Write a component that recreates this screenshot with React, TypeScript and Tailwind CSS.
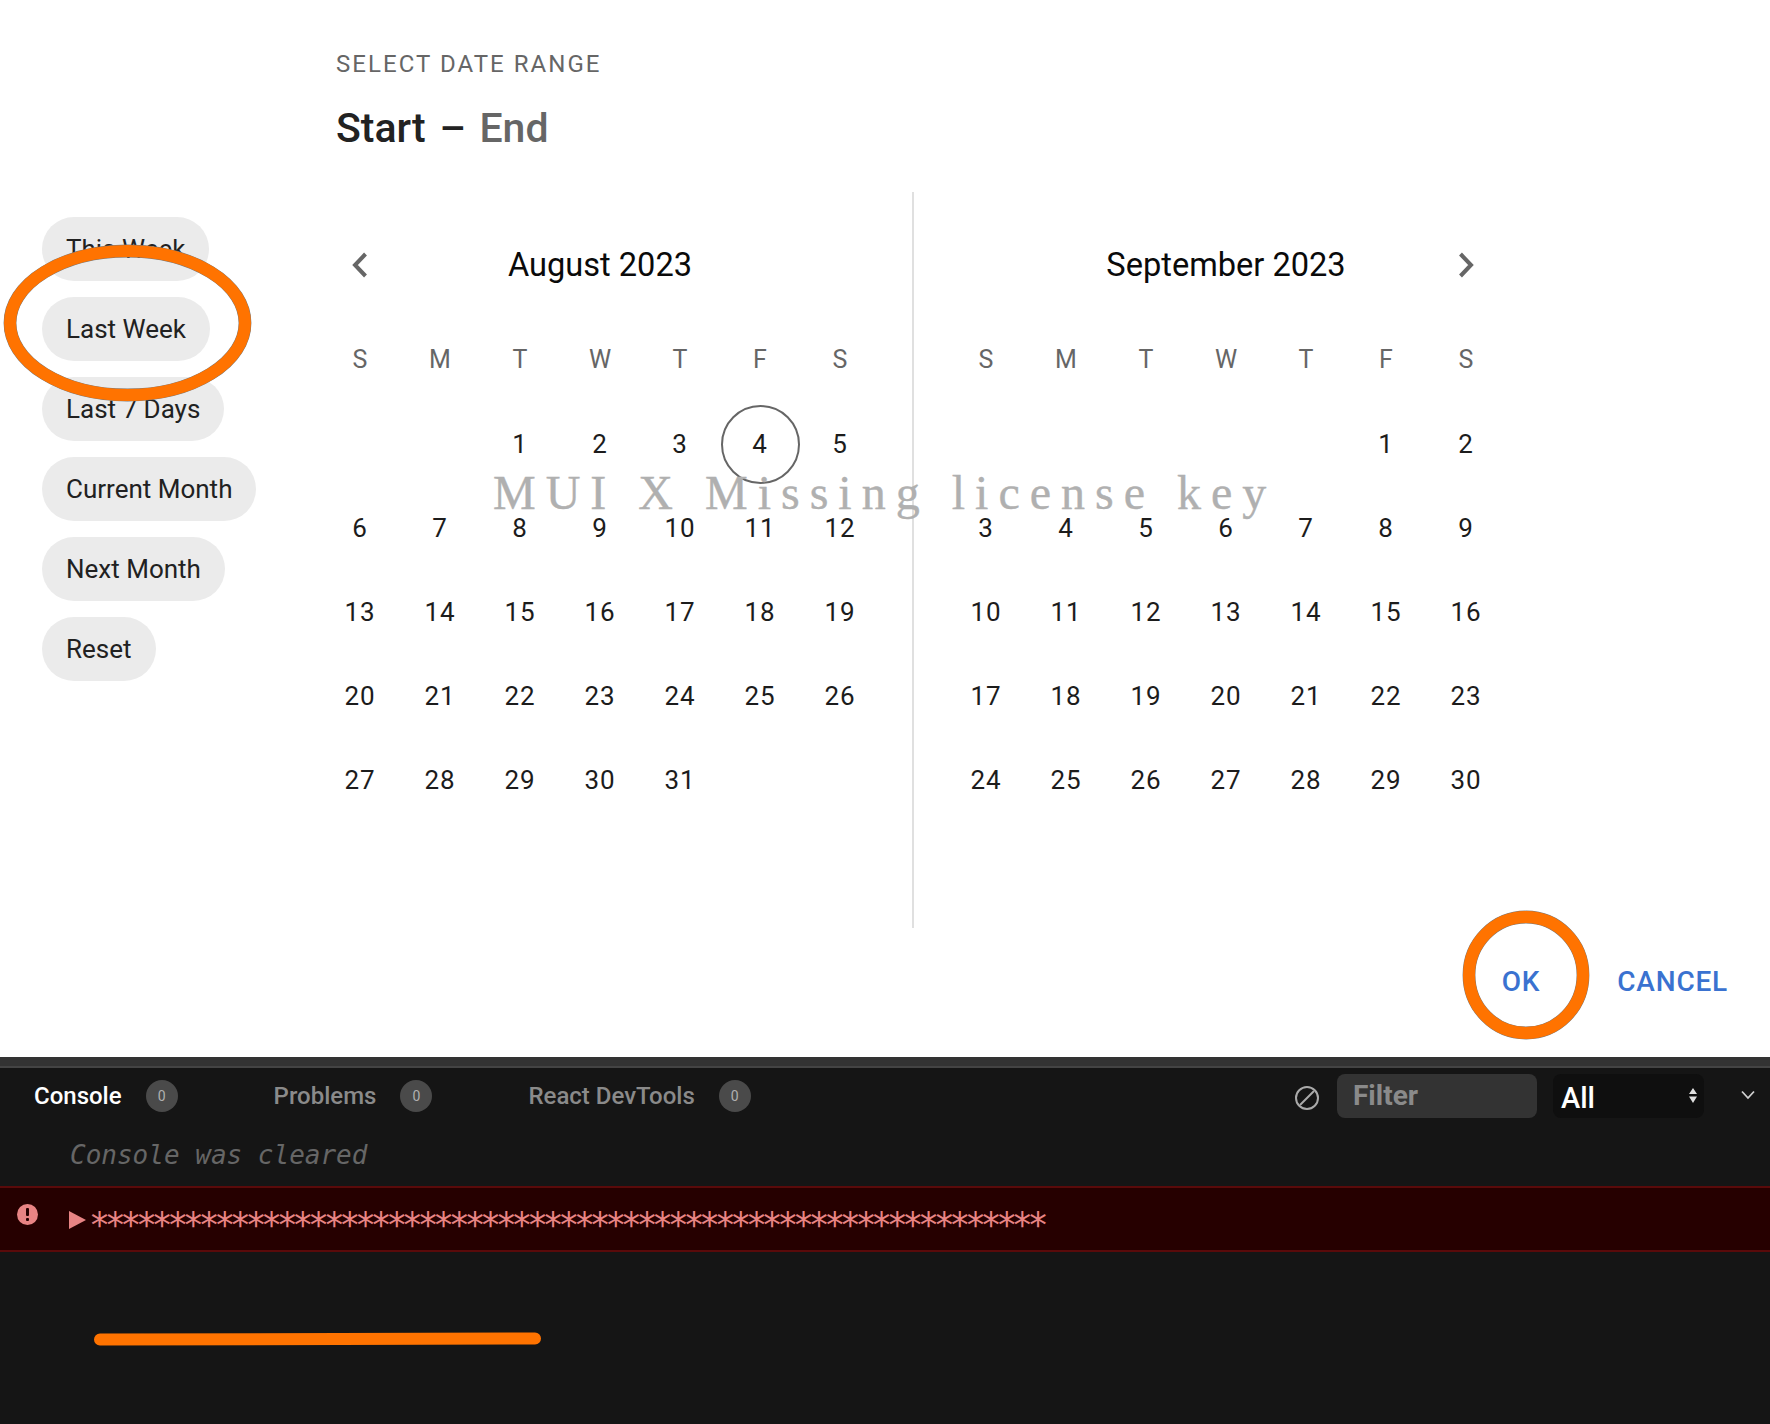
import React from "react";

const weekdays = ["S", "M", "T", "W", "T", "F", "S"];
const aug: (number | null)[] = [null, null, 1, 2, 3, 4, 5, ...Array.from({ length: 26 }, (_, i) => i + 6)];
const sep: (number | null)[] = [null, null, null, null, null, 1, 2, ...Array.from({ length: 28 }, (_, i) => i + 3)];

function Chevron({ dir }: { dir: "left" | "right" }) {
  return (
    <svg width="16" height="26" viewBox="0 0 16 26" fill="none">
      <path
        d={dir === "left" ? "M13.5 2 L3 13 L13.5 24" : "M2.5 2 L13 13 L2.5 24"}
        stroke="#666666"
        strokeWidth="4"
      />
    </svg>
  );
}

function Month({ title, days, nav, today }: { title: string; days: (number | null)[]; nav: "left" | "right"; today?: number }) {
  return (
    <div className="w-[560px] pt-[49px]">
      <div className={"flex h-[48px] items-center " + (nav === "right" ? "flex-row-reverse" : "")}>
        <div className="flex w-[80px] justify-center">
          <Chevron dir={nav} />
        </div>
        <div className="flex-1 text-center text-[32.6px] leading-[48px] text-[#0a0a0a]">{title}</div>
        <div className="w-[80px]" />
      </div>
      <div className="mt-[51px] grid grid-cols-7">
        {weekdays.map((d, i) => (
          <div key={i} className="flex h-[40px] items-center justify-center text-[25px] text-[#666666]">
            {d}
          </div>
        ))}
      </div>
      <div className="mt-[22px] grid grid-cols-7">
        {days.map((d, i) => (
          <div key={i} className="flex h-[84px] items-center justify-center text-[26px] tracking-[0.8px] text-[#1c1c1c]">
            {d !== null && (
              <span
                className={
                  "flex h-[79px] w-[79px] shrink-0 items-center justify-center rounded-full " +
                  (d === today ? "border-2 border-[#666666]" : "")
                }
              >
                {d}
              </span>
            )}
          </div>
        ))}
      </div>
    </div>
  );
}

function Chip({ label }: { label: string }) {
  return (
    <div className="flex h-[64px] w-fit items-center rounded-full bg-[#ebebeb] px-[24px] text-[26px] text-[#212121]">
      {label}
    </div>
  );
}

function Tab({ label, active }: { label: string; active?: boolean }) {
  return (
    <div className="flex items-center gap-[24px]">
      <span className={"text-[24px] font-medium " + (active ? "text-white" : "text-[#8a8a8a]")}>{label}</span>
      <span className="flex h-[32px] w-[32px] items-center justify-center rounded-full bg-[#4a4a4a] text-[14px] text-[#b0b0b0]">
        0
      </span>
    </div>
  );
}

export default function App() {
  return (
    <div className="relative h-[1424px] w-[1770px] overflow-hidden bg-white font-['Roboto',sans-serif]">
      <div className="flex h-[1057px]">
        <div className="flex w-[320px] flex-col gap-[16px] pl-[42px] pt-[217px]">
          {["This Week", "Last Week", "Last 7 Days", "Current Month", "Next Month", "Reset"].map((c) => (
            <Chip key={c} label={c} />
          ))}
        </div>
        <div className="flex-1">
          <div className="ml-[16px] mt-[46px] text-[24px] leading-[36px] tracking-[2.05px] text-[#666666]">SELECT DATE RANGE</div>
          <div className="ml-[16px] mt-[18px] text-[41px] font-medium leading-[56px] [word-spacing:3.5px]">
            <span className="text-[#222222]">Start – </span>
            <span className="text-[#666666]">End</span>
          </div>
          <div className="mt-[36px] flex h-[736px]">
            <Month title="August 2023" days={aug} nav="left" today={4} />
            <div className="mx-[32px] w-[2px] bg-[#e0e0e0]" />
            <Month title="September 2023" days={sep} nav="right" />
          </div>
          <div className="mt-[26px] flex h-[56px] items-center justify-end gap-[77px] pr-[42px] text-[28px] font-medium tracking-[0.8px] text-[#3a72d0]">
            <span>OK</span>
            <span>CANCEL</span>
          </div>
        </div>
      </div>

      <div className="h-[11px] border-b-2 border-[#444444] bg-[#333333]" />
      <div className="h-[356px] bg-[#151515]">
        <div className="flex h-[56px] items-center pl-[34px] pr-[15px]">
          <div className="flex items-center gap-[96px]">
            <Tab label="Console" active />
            <Tab label="Problems" />
            <Tab label="React DevTools" />
          </div>
          <div className="ml-auto flex items-center">
            <svg width="26" height="26" viewBox="0 0 26 26" fill="none" className="mr-[17px] mt-[4px]">
              <circle cx="13" cy="13" r="11" stroke="#aaaaaa" strokeWidth="2" />
              <path d="M6 20 L20 6" stroke="#aaaaaa" strokeWidth="2" />
            </svg>
            <div className="flex h-[44px] w-[200px] items-center rounded-[8px] bg-[#333333] pl-[16px] text-[28px] font-bold text-[#8a8a8a]">
              Filter
            </div>
            <div className="ml-[16px] flex h-[44px] w-[151px] items-center justify-between rounded-[8px] bg-[#0f0f0f] pl-[8px] pr-[6px] text-[29px] font-medium text-white">
              <span className="mt-[5px]">All</span>
              <svg width="10" height="16" viewBox="0 0 10 16" fill="#e0e0e0">
                <path d="M5 0 L9 6 L1 6 Z M5 15 L9 8.5 L1 8.5 Z" />
              </svg>
            </div>
            <svg width="14" height="10" viewBox="0 0 14 10" fill="none" className="mb-[3px] ml-[37px]">
              <path d="M1 1.5 L7 8 L13 1.5" stroke="#d0d0d0" strokeWidth="1.8" />
            </svg>
          </div>
        </div>
        <div className="mt-[6px] h-[56px] pl-[70px] font-['DejaVu_Sans_Mono',monospace] text-[26px] italic leading-[50px] text-[#666666]">
          Console was cleared
        </div>
        <div className="flex h-[66px] items-start overflow-hidden border-y-2 border-[#5a0a0a] bg-[#260000] pl-[17px]">
          <svg width="21" height="21" viewBox="0 0 21 21" className="mt-[16px]">
            <circle cx="10.5" cy="10.5" r="10.5" fill="#e88484" />
            <rect x="9" y="4" width="3" height="8" rx="1" fill="#260000" />
            <rect x="9" y="14" width="3" height="3" rx="1" fill="#260000" />
          </svg>
          <svg width="17" height="18" viewBox="0 0 17 18" className="ml-[31px] mt-[23px]">
            <path d="M0 0 L17 9 L0 18 Z" fill="#e88484" />
          </svg>
          <span className="ml-[3px] mt-[14px] font-['DejaVu_Sans_Mono',monospace] text-[35px] leading-[46px] tracking-[-5.43px] text-[#e88484]">
            {"*".repeat(61)}
          </span>
        </div>
      </div>

      {/* watermark */}
      <div className="pointer-events-none absolute left-[493px] top-[463px] whitespace-nowrap font-['Liberation_Serif',serif] text-[48px] leading-[60px] tracking-[10px] text-[#b0b0b0] [-webkit-text-stroke:0.4px_#b0b0b0]">
        MUI X Missing license key
      </div>

      {/* annotations */}
      <svg className="pointer-events-none absolute left-0 top-0" width="1770" height="1424" viewBox="0 0 1770 1424" fill="none">
        <ellipse cx="127.5" cy="323" rx="117.5" ry="72" stroke="#777777" strokeWidth="12.8" />
        <ellipse cx="127.5" cy="323" rx="117.5" ry="72" stroke="#ff7300" strokeWidth="12" />
        <ellipse cx="1526" cy="975" rx="57" ry="58" stroke="#777777" strokeWidth="12.8" />
        <ellipse cx="1526" cy="975" rx="57" ry="58" stroke="#ff7300" strokeWidth="12" />
        <path d="M100 1339.5 L535 1338.5" stroke="#ff7300" strokeWidth="12" strokeLinecap="round" />
      </svg>
    </div>
  );
}
